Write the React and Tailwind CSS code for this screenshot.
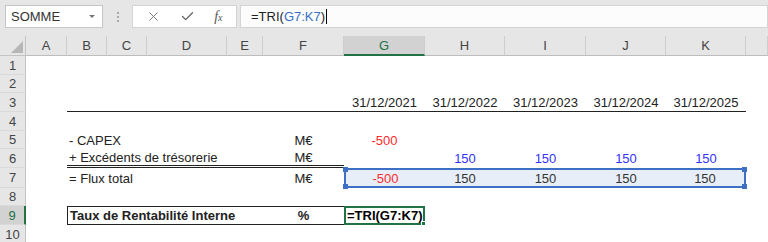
import { X, Check } from 'lucide-react'

const cols = ['A', 'B', 'C', 'D', 'E', 'F', 'G', 'H', 'I', 'J', 'K', '']

const font = { fontFamily: '"Liberation Sans", Arial, sans-serif' }

function Handle({ className }) {
  return <span className={'absolute w-[5px] h-[5px] bg-[#3d6fc5] ' + className} />
}

function Cell({ children, className = '' }) {
  return <div className={'flex items-center text-[13px] leading-none min-h-0 ' + className}>{children}</div>
}

function Row({ n, children, active }) {
  return (
    <>
      <div
        className={
          'flex items-center justify-center text-[13px] leading-none min-h-0 border-b border-[#dadada] ' +
          (active
            ? ' bg-[#d2d2d2] text-[#217346] border-r-2 border-r-[#217346]'
            : ' bg-[#e6e6e6] text-[#444] border-r border-r-[#c3c3c3]')
        }
      >
        {n}
      </div>
      {children}
    </>
  )
}

export default function App() {
  const years = ['31/12/2021', '31/12/2022', '31/12/2023', '31/12/2024', '31/12/2025']

  return (
    <div className="w-[768px] h-[242px] overflow-hidden bg-white text-[#222]" style={font}>
      {/* formula bar */}
      <div className="h-[36px] bg-[#e6e6e6] flex items-start pt-[5px] pl-[5px]">
        <div className="w-[98px] h-[23px] bg-white border border-[#c6c6c6] flex items-center pl-[5px] pr-[6px] justify-between text-[13px] text-[#333]">
          <span>SOMME</span>
          <span className="w-0 h-0 border-l-[3px] border-r-[3px] border-t-[3px] border-l-transparent border-r-transparent border-t-[#777] mr-[1px]" />
        </div>
        <div className="w-[29px] h-[23px] flex flex-col items-center justify-center gap-[2px]">
          <span className="w-[2px] h-[2px] bg-[#aaa]" />
          <span className="w-[2px] h-[2px] bg-[#aaa]" />
          <span className="w-[2px] h-[2px] bg-[#aaa]" />
        </div>
        <div className="w-[105px] h-[23px] bg-white border border-[#d4d4d4] flex items-center justify-around px-[4px] text-[#666]">
          <X size={15} strokeWidth={1.4} />
          <Check size={15} strokeWidth={2.2} />
          <span className="italic text-[14px] text-[#555]" style={{ fontFamily: '"Liberation Serif", serif' }}>
            f<span className="text-[10px]">x</span>
          </span>
        </div>
        <div className="ml-[3px] flex-1 h-[23px] bg-[#fcfcfc] border border-[#d4d4d4] flex items-center pl-[10px] text-[13px]">
          <span className="text-[#222]">=TRI(</span>
          <span className="text-[#3a6fc6]">G7:K7</span>
          <span className="text-[#222]">)</span>
          <span className="w-px h-[15px] bg-black ml-[1px]" />
        </div>
      </div>

      {/* sheet */}
      <div className="grid grid-cols-[26px_41px_40px_40px_80px_36px_81px_81px_80px_81px_80px_80px_22px] grid-rows-[20px_19px_18px_19px_19px_18px_19px_20px_18px_19px_19px]">
        {/* header row */}
        <div className="bg-[#e6e6e6] border-r border-b border-[#c3c3c3] relative">
          <svg className="absolute right-[2px] bottom-[2px]" width="12" height="12" viewBox="0 0 12 12">
            <polygon points="12,0 12,12 0,12" fill="#b7b7b7" />
          </svg>
        </div>
        {cols.map((c) => (
          <div
            key={c || 'L'}
            className={
              'flex items-center justify-center text-[13px] leading-none border-r border-[#cdcdcd] ' +
              (c === 'G'
                ? 'bg-[#d2d2d2] text-[#217346] border-b-2 border-b-[#217346]'
                : 'bg-[#e6e6e6] text-[#444] border-b border-b-[#bdbdbd]')
            }
          >
            {c}
          </div>
        ))}

        {/* row 1, 2 */}
        <Row n={1}><div className="col-span-12" /></Row>
        <Row n={2}><div className="col-span-12" /></Row>

        {/* row 3 dates */}
        <Row n={3}>
          <div />
          <div className="col-span-5 border-b border-[#222]" />
          {years.map((y) => (
            <Cell key={y} className="justify-center border-b border-[#222]">{y}</Cell>
          ))}
          <div />
        </Row>

        <Row n={4}><div className="col-span-12" /></Row>

        {/* row 5 capex */}
        <Row n={5}>
          <div />
          <Cell className="col-span-4 pl-[2px]">- CAPEX</Cell>
          <Cell className="justify-center">M€</Cell>
          <Cell className="justify-center text-[#ff2b2b]">-500</Cell>
          <div className="col-span-5" />
        </Row>

        {/* row 6 excedents */}
        <Row n={6}>
          <div />
          <Cell className="col-span-4 pl-[2px] border-b-[3px] border-double border-[#222]">+ Excédents de trésorerie</Cell>
          <Cell className="justify-center border-b-[3px] border-double border-[#222]">M€</Cell>
          <div />
          {[1, 2, 3, 4].map((i) => (
            <Cell key={i} className="justify-center text-[#3333ff]">150</Cell>
          ))}
          <div />
        </Row>

        {/* row 7 flux total */}
        <Row n={7}>
          <div />
          <Cell className="col-span-4 pl-[2px]">= Flux total</Cell>
          <Cell className="justify-center">M€</Cell>
          <Cell className="justify-center text-[#ff2b2b] bg-[#e8eef8] border-y-2 border-l-2 border-[#3d6fc5] relative">
            -500
            <Handle className="-left-[3px] -top-[3px]" />
            <Handle className="-left-[3px] -bottom-[3px]" />
          </Cell>
          <Cell className="justify-center bg-[#e8eef8] border-y-2 border-[#3d6fc5] text-[#333]">150</Cell>
          <Cell className="justify-center bg-[#e8eef8] border-y-2 border-[#3d6fc5] text-[#333]">150</Cell>
          <Cell className="justify-center bg-[#e8eef8] border-y-2 border-[#3d6fc5] text-[#333]">150</Cell>
          <Cell className="justify-center bg-[#e8eef8] border-y-2 border-r-2 border-[#3d6fc5] text-[#333] relative">
            150
            <Handle className="-right-[3px] -top-[3px]" />
            <Handle className="-right-[3px] -bottom-[3px]" />
          </Cell>
          <div />
        </Row>

        <Row n={8}><div className="col-span-12" /></Row>

        {/* row 9 TRI */}
        <Row n={9} active>
          <div />
          <Cell className="col-span-4 pl-[2px] font-bold border-y border-l border-[#222]">Taux de Rentabilité Interne</Cell>
          <Cell className="justify-center font-bold border-y border-[#222]">%</Cell>
          <Cell className="pl-[1px] font-bold border-2 border-[#217346] relative text-black">
            =TRI(G7:K7)
            <span className="absolute -right-[3px] -bottom-[3px] w-[5px] h-[5px] bg-[#217346] border border-white" />
          </Cell>
          <div className="col-span-5" />
        </Row>

        <Row n={10}><div className="col-span-12" /></Row>
      </div>
    </div>
  )
}
